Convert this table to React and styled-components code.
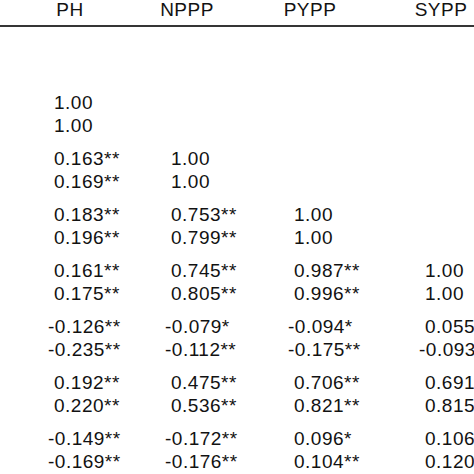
import React from 'react';
import styled, { createGlobalStyle } from 'styled-components';

const headers = ['PH', 'NPPP', 'PYPP', 'SYPP'];

const groups = [
  [['1.00'], ['1.00']],
  [['0.163**', '1.00'], ['0.169**', '1.00']],
  [['0.183**', '0.753**', '1.00'], ['0.196**', '0.799**', '1.00']],
  [['0.161**', '0.745**', '0.987**', '1.00'], ['0.175**', '0.805**', '0.996**', '1.00']],
  [['-0.126**', '-0.079*', '-0.094*', '0.055'], ['-0.235**', '-0.112**', '-0.175**', '-0.093']],
  [['0.192**', '0.475**', '0.706**', '0.691'], ['0.220**', '0.536**', '0.821**', '0.815']],
  [['-0.149**', '-0.172**', '0.096*', '0.106'], ['-0.169**', '-0.176**', '0.104**', '0.120']],
];

const App = () => {
  return (
    <Page>
      <GlobalStyle />
      <HeadRow>
        {headers.map((h) => (
          <HeadCell key={h}>{h}</HeadCell>
        ))}
      </HeadRow>
      <Rule />
      <Body>
        {groups.map((group, gi) => (
          <Group key={gi}>
            {group.map((row, ri) => (
              <Row key={ri}>
                {row.map((v, ci) => (
                  <Value key={ci} $neg={v.startsWith('-')}>
                    {v}
                  </Value>
                ))}
              </Row>
            ))}
          </Group>
        ))}
      </Body>
    </Page>
  );
};

const GlobalStyle = createGlobalStyle`
  html, body {
    margin: 0;
    padding: 0;
    background: #ffffff;
    overflow: hidden;
  }
`;

const Page = styled.div`
  width: 474px;
  height: 474px;
  overflow: hidden;
  background: #ffffff;
  color: #121212;
  font-family: "Liberation Sans", Arial, Helvetica, sans-serif;
  font-size: 19px;
  letter-spacing: 0.5px;
  line-height: 23px;
`;

const Columns = styled.div`
  display: grid;
  grid-template-columns: 117px 123px 131px 1fr;
  padding-left: 54px;
`;

const HeadRow = styled(Columns)`
  margin-top: -2px;
  height: 23px;
`;

const HeadCell = styled.div`
  width: 32px;
  display: flex;
  justify-content: center;
  white-space: nowrap;
`;

const Rule = styled.div`
  margin-top: 4px;
  height: 2px;
  background: #353535;
`;

const Body = styled.div`
  display: flex;
  flex-direction: column;
  gap: 10px;
  padding-top: 64px;
`;

const Group = styled.div`
  display: flex;
  flex-direction: column;
`;

const Row = styled(Columns)`
  height: 23px;
`;

const Value = styled.div`
  white-space: nowrap;
  margin-left: ${(p) => (p.$neg ? '-6px' : '0')};
`;

export default App;
